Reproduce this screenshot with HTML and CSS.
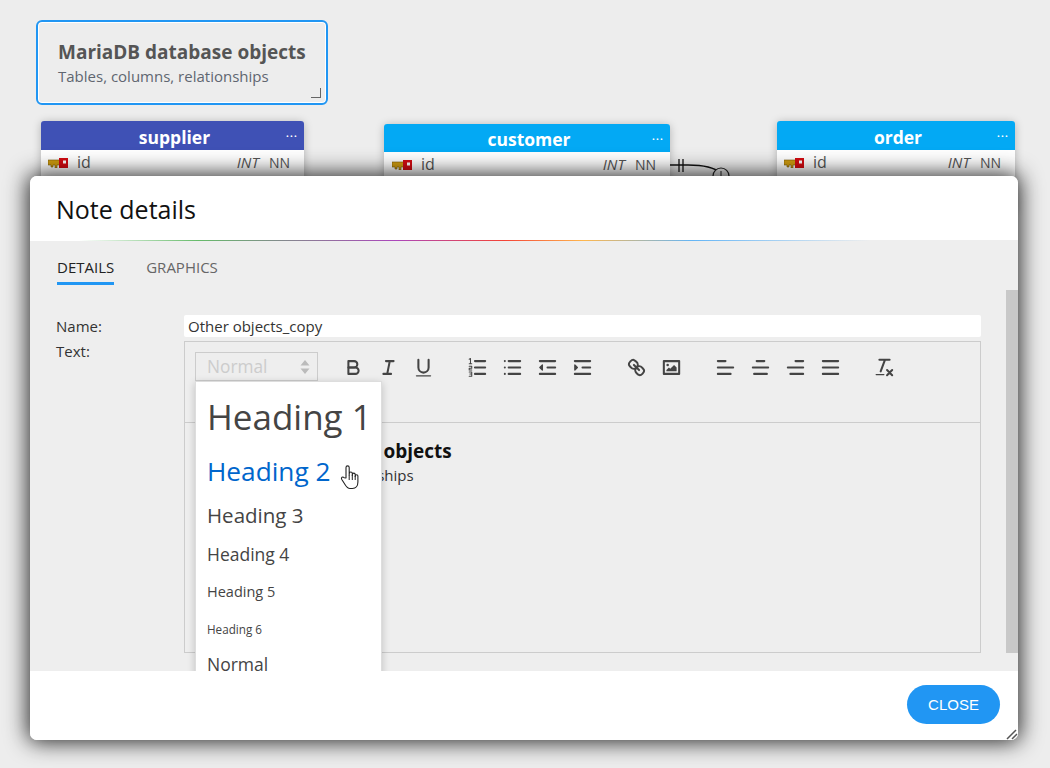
FILE: index.html
```html
<!DOCTYPE html>
<html lang="en">
<head>
<meta charset="utf-8">
<title>Note details</title>
<link rel="stylesheet" href="styles.css">
</head>
<body>
<main class="canvas">
  <div class="note">
    <div class="note-title">MariaDB database objects</div>
    <div class="note-sub">Tables, columns, relationships</div>
    <span class="note-grip"></span>
  </div>

  <section class="table supplier">
    <header class="table-head"><span class="table-name">supplier</span><span class="table-more">•••</span></header>
    <div class="table-row">
      <svg class="key" viewBox="0 0 20 10"><path d="M0 2h12v5H9v3H7V7H5v2H3V7H0z" fill="#cf9c10" stroke="#7a5a08" stroke-width=".6"/><rect x="11" y="0" width="9" height="10" fill="#d40b12"/><rect x="15" y="2.500" width="3" height="3" fill="#fff"/></svg>
      <span class="col-name">id</span><em class="col-type">INT</em><span class="col-nn">NN</span>
    </div>
  </section>

  <section class="table customer">
    <header class="table-head"><span class="table-name">customer</span><span class="table-more">•••</span></header>
    <div class="table-row">
      <svg class="key" viewBox="0 0 20 10"><path d="M0 2h12v5H9v3H7V7H5v2H3V7H0z" fill="#cf9c10" stroke="#7a5a08" stroke-width=".6"/><rect x="11" y="0" width="9" height="10" fill="#d40b12"/><rect x="15" y="2.500" width="3" height="3" fill="#fff"/></svg>
      <span class="col-name">id</span><em class="col-type">INT</em><span class="col-nn">NN</span>
    </div>
  </section>

  <section class="table order">
    <header class="table-head"><span class="table-name">order</span><span class="table-more">•••</span></header>
    <div class="table-row">
      <svg class="key" viewBox="0 0 20 10"><path d="M0 2h12v5H9v3H7V7H5v2H3V7H0z" fill="#cf9c10" stroke="#7a5a08" stroke-width=".6"/><rect x="11" y="0" width="9" height="10" fill="#d40b12"/><rect x="15" y="2.500" width="3" height="3" fill="#fff"/></svg>
      <span class="col-name">id</span><em class="col-type">INT</em><span class="col-nn">NN</span>
    </div>
  </section>

  <svg class="relation" viewBox="0 0 64 30"><path d="M0 6H18C34 6 44 8 50 14" fill="none" stroke="#111" stroke-width="1.500"/><path d="M9 0V13M13 0V13" stroke="#111" stroke-width="1.300"/><circle cx="51" cy="17" r="8" fill="#ededed" stroke="#222" stroke-width="1.200"/><path d="M51 12V18" stroke="#222"/></svg>
</main>

<div class="modal">
  <header class="modal-head"><h1 class="modal-title">Note details</h1></header>
  <div class="rainbow"></div>
  <div class="modal-body">
    <div class="modal-scroll">
      <nav class="tabs">
        <span class="tab tab-active">DETAILS</span>
        <span class="tab">GRAPHICS</span>
      </nav>
      <div class="form">
        <label class="form-label">Name:</label>
        <div class="name-input">Other objects_copy</div>
        <label class="form-label form-label-text">Text:</label>
        <div class="editor">
          <div class="toolbar">
            <div class="format-select">
              <span>Normal</span>
              <svg class="select-arrows" viewBox="0 0 10 14"><path d="M5 0 9.500 5.500H.5zM5 14 .5 8.500H9.500z" fill="#bbb"/></svg>
              <ul class="format-menu">
                <li class="h1">Heading 1</li>
                <li class="h2">Heading 2</li>
                <li class="h3">Heading 3</li>
                <li class="h4">Heading 4</li>
                <li class="h5">Heading 5</li>
                <li class="h6">Heading 6</li>
                <li class="h0">Normal</li>
              </ul>
            </div>
            <div class="tool-group">
              <svg class="tool" viewBox="0 0 18 18"><path d="M5 4H9.500A2.500 2.500 0 0 1 12 6.500v0A2.500 2.500 0 0 1 9.500 9H5V4Z"/><path d="M5 9h5.500A2.500 2.500 0 0 1 13 11.500v0A2.500 2.500 0 0 1 10.500 14H5V9Z"/></svg>
              <svg class="tool" viewBox="0 0 18 18"><path d="M7 4H13M5 14H11M8 14 10 4"/></svg>
              <svg class="tool" viewBox="0 0 18 18"><path d="M5 3V9a4 4 0 0 0 8 0V3"/><rect class="fill" x="3" y="15" width="12" height="1" rx=".5"/></svg>
            </div>
            <div class="tool-group">
              <svg class="tool" viewBox="0 0 18 18"><path d="M7 4H15M7 9H15M7 14H15"/><path class="thin" d="M2.500 2.500 3.500 2V6M2.500 6H4.500M2.500 8H4.500V9.500H2.500V11H4.500M2.500 12.500H4.500V14H3M4.500 14V15.800H2.500"/></svg>
              <svg class="tool" viewBox="0 0 18 18"><path d="M6 4H15M6 9H15M6 14H15M3 4V4M3 9V9M3 14V14"/></svg>
              <svg class="tool" viewBox="0 0 18 18"><path d="M3 14H15M3 4H15M9 9H15"/><path class="fill-stroke" d="M5 7V11L3 9Z"/></svg>
              <svg class="tool" viewBox="0 0 18 18"><path d="M3 14H15M3 4H15M9 9H15"/><path class="fill-stroke" d="M3 7V11L5 9Z"/></svg>
            </div>
            <div class="tool-group">
              <svg class="tool" viewBox="0 0 18 18"><path d="M7 7 11 11"/><path d="M8.900 4.577a3.476 3.476 0 0 1 .36 4.679A3.476 3.476 0 0 1 4.577 8.900C3.185 7.500 2.035 6.400 4.217 4.217S7.500 3.185 8.900 4.577Z"/><path d="M13.423 9.100a3.476 3.476 0 0 0-4.679-.36 3.476 3.476 0 0 0 .36 4.679c1.392 1.392 2.500 2.542 4.679.36S14.815 10.500 13.423 9.100Z"/></svg>
              <svg class="tool" viewBox="0 0 18 18"><rect x="3" y="4" width="12" height="10"/><circle class="fill" cx="6" cy="7" r="1"/><path class="fill" d="M5 12V11L7 9 8 10 11 7 13 9V12Z"/></svg>
            </div>
            <div class="tool-group">
              <svg class="tool" viewBox="0 0 18 18"><path d="M3 9H15M3 14H13M3 4H9"/></svg>
              <svg class="tool" viewBox="0 0 18 18"><path d="M15 9H3M14 14H4M12 4H6"/></svg>
              <svg class="tool" viewBox="0 0 18 18"><path d="M15 9H3M15 14H5M15 4H9"/></svg>
              <svg class="tool" viewBox="0 0 18 18"><path d="M15 9H3M15 14H3M15 4H3"/></svg>
            </div>
            <div class="tool-group">
              <svg class="tool" viewBox="0 0 18 18"><path d="M5 3H13M6 12 9.350 3M11 11 15 15M15 11 11 15"/><rect class="fill" x="2" y="14" width="7" height="1" rx=".5"/></svg>
            </div>
          </div>
          <div class="editor-text">
            <div class="editor-title">MariaDB database objects</div>
            <div class="editor-sub">Tables, columns, relationships</div>
          </div>
        </div>
      </div>
    </div>
    <div class="scrollbar"><div class="scroll-thumb"></div></div>
    <svg class="hand" viewBox="0 0 20 26"><path d="M6 14V3.500a1.600 1.600 0 0 1 3.200 0V11l.1-1.500a1.500 1.500 0 0 1 3 0V11.500l.1-1a1.400 1.400 0 0 1 2.800 0V12.500l.1-.5a1.300 1.300 0 0 1 2.600 0V18c0 3.500-2 6.500-5.500 6.500H10C7.500 24.500 6.500 23 5 20.500L1.800 15.500c-1.200-2 1-3.200 2.300-1.800Z" fill="#fff" stroke="#222" stroke-width="1.100" stroke-linejoin="round"/><path d="M9.200 11V16M12.300 11V16M15.200 12V16" stroke="#222" fill="none"/></svg>
  </div>
  <footer class="modal-foot">
    <button class="close-btn" type="button">CLOSE</button>
    <svg class="modal-grip" viewBox="0 0 12 12"><path d="M1 11 10 2M6 11 11 6" stroke="#555" stroke-width="1.500" fill="none"/></svg>
  </footer>
</div>
</body>
</html>
```
FILE: styles.css
```css
* { box-sizing: border-box; }
html, body { margin: 0; height: 100%; }
body {
  width: 1050px;
  height: 768px;
  overflow: hidden;
  position: relative;
  background: #ededed;
  font-family: "Open Sans", sans-serif;
  color: #444;
}
.canvas { position: absolute; inset: 0; }

.note {
  position: absolute;
  left: 36px;
  top: 20px;
  width: 292px;
  height: 85px;
  border: 2px solid #2196f3;
  border-radius: 6px;
  box-shadow: inset 0 0 0 1px #fff;
  padding: 17px 20px;
  color: #555;
}
.note-title { font-size: 19px; font-weight: 700; line-height: 26px; }
.note-sub { font-size: 15px; line-height: 22px; color: #606670; }
.note-grip {
  position: absolute;
  right: 5px;
  bottom: 5px;
  width: 10px;
  height: 10px;
  border-right: 1px solid #666;
  border-bottom: 1px solid #666;
}

.table {
  position: absolute;
  border-radius: 4px 4px 0 0;
  background: #fff;
  height: 90px;
  box-shadow: 0 1px 8px rgba(0, 0, 0, .25);
}
.supplier { left: 41px; top: 121px; width: 263px; }
.customer { left: 384px; top: 124px; width: 286px; }
.order { left: 777px; top: 121px; width: 238px; }
.table-head {
  height: 29px;
  position: relative;
  display: flex;
  align-items: center;
  justify-content: center;
  padding: 2px 0 0 4px;
  color: #fff;
  border-radius: 3px 3px 0 0;
  background: #03a9f4;
}
.supplier .table-head { background: #3f51b5; }
.customer .table-head { height: 28px; }
.table-name { font-size: 17.500px; font-weight: 700; }
.table-more {
  position: absolute;
  right: 6px;
  top: 10px;
  font-size: 7.500px;
  letter-spacing: 1.200px;
  line-height: 10px;
}
.table-row {
  height: 24px;
  display: flex;
  align-items: center;
  padding: 0 14px 0 7px;
  font-size: 14px;
  color: #555;
}
.customer .table-row { padding-left: 8px; }
.key { width: 20px; height: 10px; margin-right: 9px; margin-top: 2px; }
.col-name { flex: 1; font-size: 16px; }
.col-type { margin-right: 10px; font-size: 15px; }

.relation {
  position: absolute;
  left: 670px;
  top: 159px;
  width: 64px;
  height: 30px;
}

.modal {
  position: absolute;
  left: 30px;
  top: 176px;
  width: 988px;
  height: 564px;
  display: flex;
  flex-direction: column;
  background: #fff;
  border-radius: 7px;
  box-shadow: 0 0 22px 2px rgba(0, 0, 0, .85);
  overflow: hidden;
}
.modal-head {
  height: 64px;
  flex: none;
  display: flex;
  align-items: center;
  padding: 2px 26px 0;
  background: #fff;
}
.modal-title { margin: 0; font-size: 25px; font-weight: 400; color: #111; }
.rainbow {
  height: 1px;
  flex: none;
  background: linear-gradient(90deg, #fff 5%, #66bb6a 17%, #ab47bc 37%, #f44336 48%, #ffb74d 56%, #64b5f6 67%, #eee 85%);
}
.modal-body {
  flex: 1;
  min-height: 0;
  position: relative;
  display: flex;
  background: #eee;
  overflow: hidden;
}
.modal-scroll { flex: 1; min-width: 0; padding: 0 25px 0 26px; }
.scrollbar { width: 12px; flex: none; padding-top: 49px; }
.scroll-thumb { height: 363px; background: #c8c8c8; }

.tabs { display: flex; gap: 32px; padding: 16px 0 0 1px; height: 74px; }
.tab { font-size: 15px; line-height: 20px; height: 28px; color: #666; }
.tab-active { color: #222; border-bottom: 3px solid #2196f3; }

.form {
  display: grid;
  grid-template-columns: 128px 1fr;
  grid-template-rows: 22px auto;
  row-gap: 4px;
  font-size: 15px;
  color: #333;
}
.form-label { line-height: 22px; }
.form-label-text { line-height: 21px; }
.name-input {
  background: #fff;
  border-radius: 2px;
  padding: 0 4px;
  line-height: 23px;
  color: #333;
}
.editor { height: 312px; border: 1px solid #ccc; }
.toolbar {
  height: 81px;
  border-bottom: 1px solid #ccc;
  padding: 10px 0 0 10px;
  display: flex;
  align-items: flex-start;
}
.format-select {
  position: relative;
  width: 123px;
  height: 29px;
  flex: none;
  border: 1px solid #ccc;
  display: flex;
  align-items: center;
  justify-content: space-between;
  padding: 0 7px 0 11px;
  font-size: 17.300px;
  color: #ccc;
}
.select-arrows { width: 10px; height: 14px; }
.format-menu {
  position: absolute;
  left: 0;
  top: 28px;
  width: 187px;
  height: 340px;
  margin: 0 0 0 -1px;
  padding: 0 0 0 11px;
  list-style: none;
  background: #fff;
  border: 1px solid #ddd;
  box-shadow: 0 2px 8px rgba(0, 0, 0, .2);
  color: #444;
  z-index: 2;
}
.format-menu li { white-space: nowrap; }
.h1 { font-size: 35px; line-height: 46px; margin-top: 12px; }
.h2 { font-size: 26.250px; line-height: 36px; margin-top: 13px; color: #06c; }
.h3 { font-size: 20.500px; line-height: 28px; margin-top: 12px; }
.h4 { font-size: 17.500px; line-height: 24px; margin-top: 13px; }
.h5 { font-size: 14.500px; line-height: 20px; margin-top: 16px; }
.h6 { font-size: 11.700px; line-height: 16px; margin-top: 19px; }
.h0 { font-size: 17.500px; line-height: 24px; margin-top: 15px; }

.tool-group { display: flex; margin-left: 19px; }
.format-select + .tool-group { margin-left: 17.500px; }
.tool {
  width: 23px;
  height: 23px;
  margin: 3.500px 6px 0;
  flex: none;
  fill: none;
  stroke: #444;
  stroke-width: 1.600;
  stroke-linecap: round;
  stroke-linejoin: round;
}
.tool .fill { fill: #444; stroke: none; }
.tool .fill-stroke { fill: #444; stroke-width: 1; }
.tool .thin { stroke-width: .8; }

.editor-text { padding: 15px 0 0 18px; color: #111; }
.editor-title { font-size: 19px; font-weight: 700; line-height: 26px; margin-left: 1px; }
.editor-sub { font-size: 15px; line-height: 23px; color: #333; }

.hand { position: absolute; left: 310px; top: 223px; width: 20px; height: 26px; z-index: 3; }

.modal-foot {
  height: 69px;
  flex: none;
  position: relative;
  background: #fff;
  display: flex;
  justify-content: flex-end;
  align-items: flex-start;
  padding: 14px 18px 0 0;
}
.close-btn {
  width: 93px;
  height: 39px;
  border: 0;
  border-radius: 20px;
  background: #2196f3;
  color: #fff;
  font-family: "Liberation Sans", Arial, sans-serif;
  font-size: 15px;
}
.modal-grip { position: absolute; right: 0; bottom: 0; width: 12px; height: 12px; }
```
